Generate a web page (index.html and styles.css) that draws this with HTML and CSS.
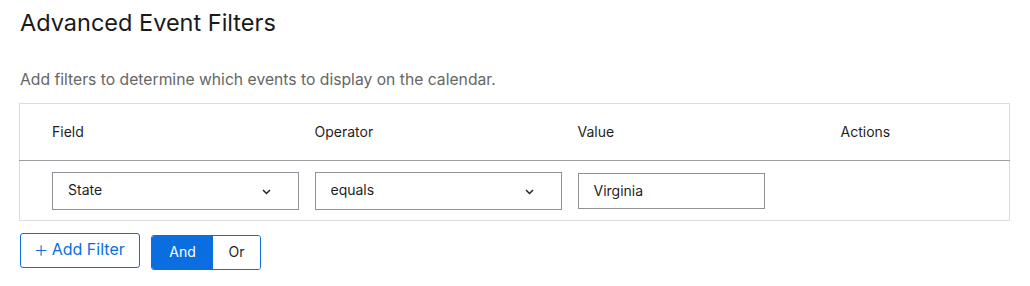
FILE: index.html
```html
<!DOCTYPE html>
<html lang="en">
  <head>
    <meta charset="UTF-8" />
    <meta name="viewport" content="width=device-width, initial-scale=1.0" />
    <title>Advanced Event Filters</title>
    <link rel="stylesheet" href="styles.css">
  </head>
  <body>
    <div id="filters">
      <h2>Advanced Event Filters</h2>
      <p class="intro">Add filters to determine which events to display on the calendar.</p>
      <table class="filter-table">
        <thead>
          <tr>
            <th class="col-field">Field</th>
            <th class="col-op">Operator</th>
            <th class="col-value">Value</th>
            <th class="col-actions">Actions</th>
          </tr>
        </thead>
        <tbody>
          <tr>
            <td>
              <div class="select">
                <span>State</span>
                <svg width="9" height="6" viewBox="0 0 9 6"><path d="M1 1l3.5 3.5L8 1" fill="none" stroke="#222" stroke-width="1.5"/></svg>
              </div>
            </td>
            <td>
              <div class="select">
                <span>equals</span>
                <svg width="9" height="6" viewBox="0 0 9 6"><path d="M1 1l3.5 3.5L8 1" fill="none" stroke="#222" stroke-width="1.5"/></svg>
              </div>
            </td>
            <td>
              <div class="text-input">Virginia</div>
            </td>
            <td></td>
          </tr>
        </tbody>
      </table>
      <div class="toolbar">
        <button class="add-btn"><span class="plus">+</span>Add Filter</button>
        <div class="toggle">
          <button class="active">And</button>
          <button>Or</button>
        </div>
      </div>
    </div>
  </body>
</html>
```

FILE: styles.css
```css
* {
  margin: 0;
  padding: 0;
  box-sizing: border-box;
  font-family: Inter, "Liberation Sans", sans-serif;
}
body {
  background-color: #fff;
  color: #1f1f1f;
}
#filters {
  padding: 9px 20px 0 19px;
  width: 1011px;
}
#filters h2 {
  font-size: 23.5px;
  font-weight: 400;
  line-height: 28px;
  padding-left: 1px;
  color: #1a1a1a;
}
.intro {
  margin-top: 34px;
  font-size: 15.7px;
  line-height: 18px;
  color: #666;
  padding-left: 1px;
}
.filter-table {
  margin-top: 14px;
  width: 991px;
  border: 1px solid #dcdcdc;
  border-collapse: collapse;
  table-layout: fixed;
}
.filter-table th {
  font-size: 14px;
  font-weight: 400;
  text-align: left;
  height: 57px;
  padding-left: 32px;
  padding-bottom: 1px;
  border-bottom: 1px solid #9a9ea3;
  color: #1f1f1f;
}
.filter-table td {
  padding: 11px 0 10px 32px;
  vertical-align: middle;
}
.filter-table .col-field,
.filter-table .col-op,
.filter-table .col-value {
  width: 263px;
}
.select {
  width: 247px;
  height: 38px;
  border: 1px solid #8f9397;
  display: flex;
  align-items: center;
  justify-content: space-between;
  padding: 0 27px 4px 15px;
  font-size: 14px;
  color: #1f1f1f;
}
.select svg {
  margin-top: 6px;
}
.text-input {
  width: 187px;
  height: 36px;
  border: 1px solid #8f9397;
  display: flex;
  align-items: center;
  padding: 0 15px 2px;
  font-size: 14px;
}
.toolbar {
  display: flex;
  align-items: flex-start;
  gap: 11px;
  margin-top: 12px;
  padding-left: 1px;
}
.add-btn {
  height: 35px;
  width: 120px;
  border: 1px solid #0a6ee0;
  border-radius: 3px;
  background: #fff;
  color: #0a6ee0;
  font-size: 16px;
  display: flex;
  align-items: center;
  justify-content: center;
  gap: 3px;
  padding-bottom: 3px;
  padding-right: 2px;
}
.add-btn .plus {
  font-size: 24px;
  font-weight: 200;
  line-height: 1;
}
.toggle {
  display: flex;
  margin-top: 2px;
  height: 35px;
  border: 1px solid #0a6ee0;
  border-radius: 3px;
  overflow: hidden;
}
.toggle button {
  border: none;
  background: #fff;
  font-size: 14px;
  color: #1f1f1f;
  width: 47px;
  padding-bottom: 2px;
}
.toggle button.active {
  background: #0a6ee0;
  color: #fff;
  width: 61px;
}
```
